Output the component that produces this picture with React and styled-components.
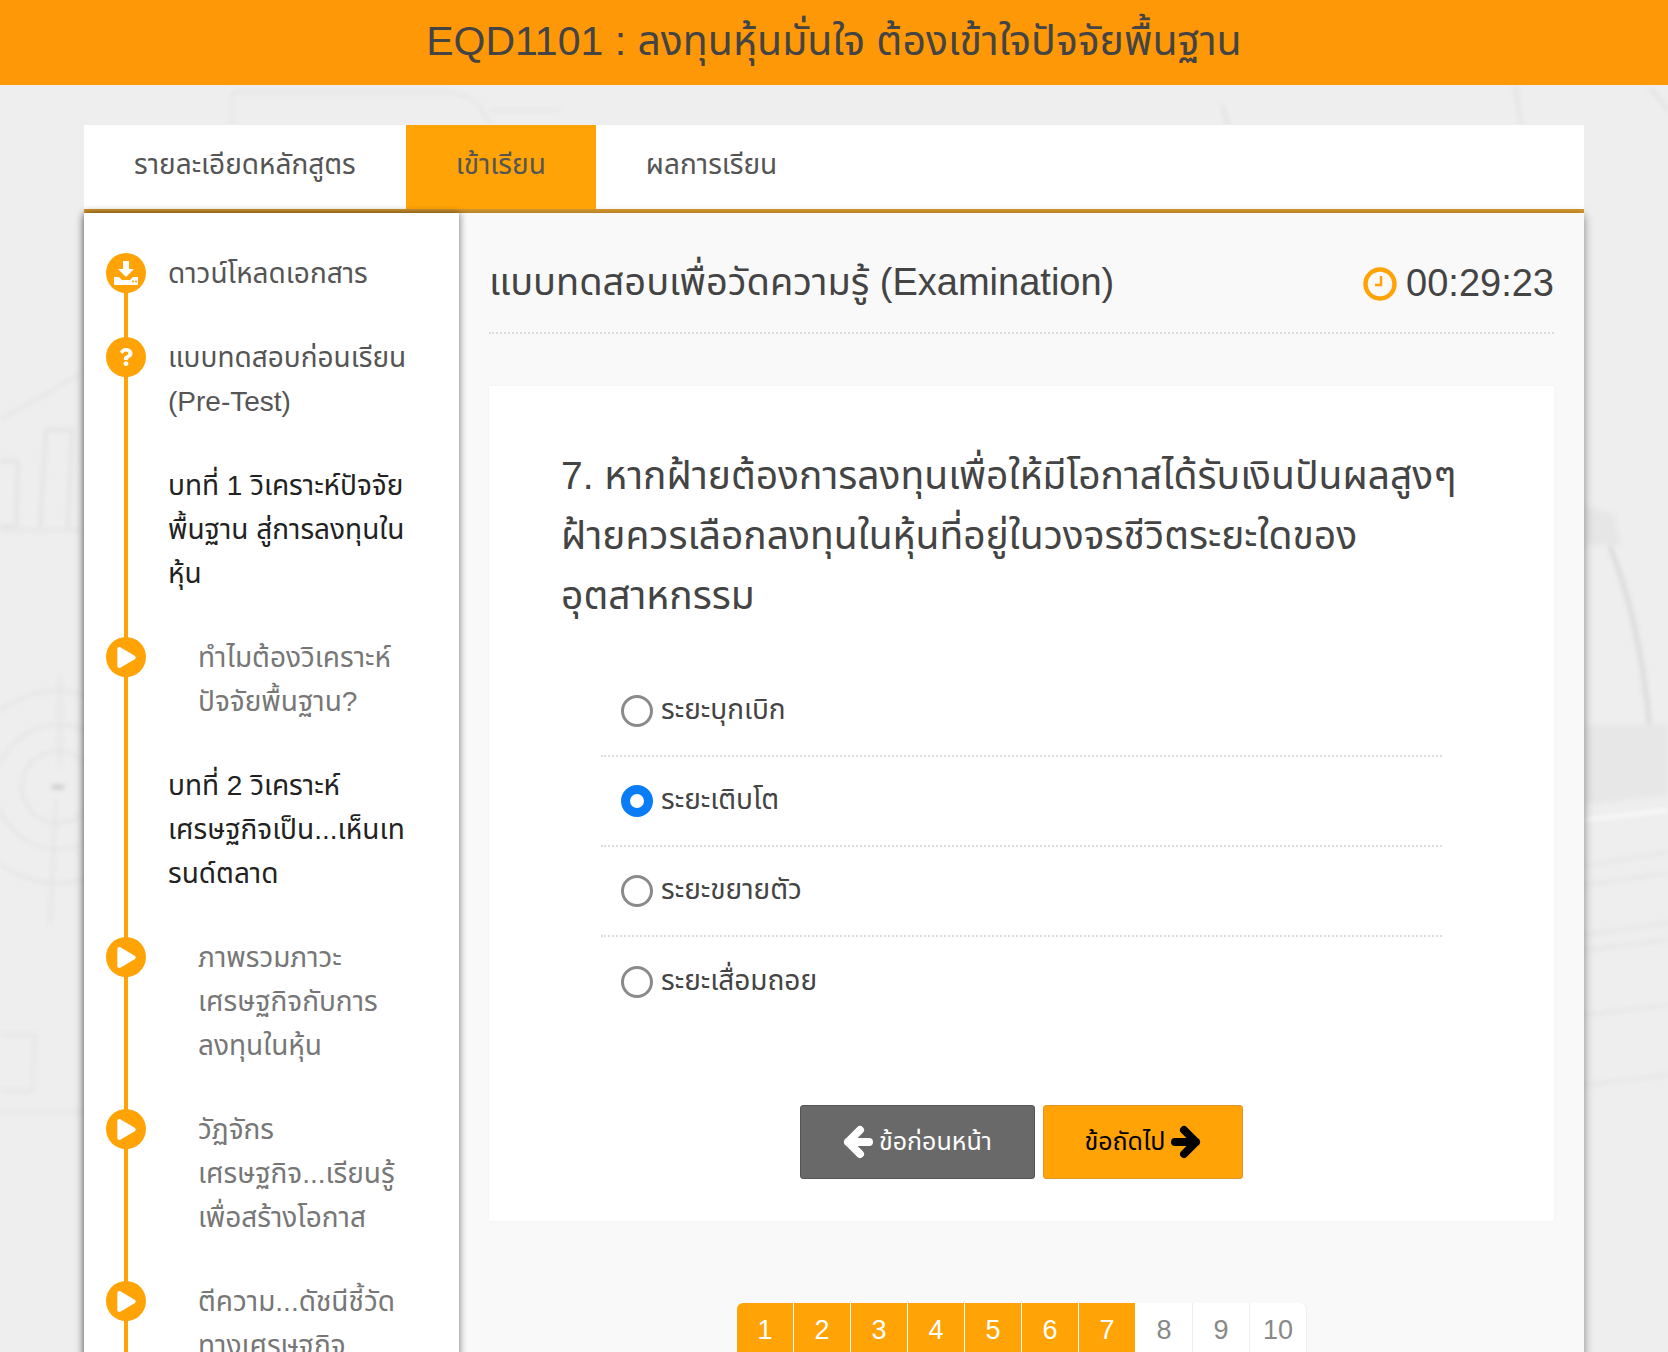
import styled, { createGlobalStyle } from "styled-components";
import { FaPlay, FaQuestion } from "react-icons/fa";

const GlobalStyle = createGlobalStyle`
  html, body {
    margin: 0;
    padding: 0;
    height: 1352px;
    overflow: hidden;
  }
  * {
    box-sizing: border-box;
  }
  body {
    font-family: "Liberation Sans", "Noto Sans Thai", "Noto Sans", sans-serif;
    color: #444;
    background: #eeeeee;
  }
`;

const orange = "#ffa306";

const Page = styled.div`
  position: relative;
  height: 1352px;
  overflow: hidden;
`;
const Backdrop = styled.svg`
  position: absolute;
  left: 0;
  top: 0;
  filter: blur(2px);
`;
const Header = styled.header`
  position: relative;
  height: 85px;
  padding-bottom: 2px;
  background: #ff9807;
  display: flex;
  align-items: center;
  justify-content: center;
  font-size: 41px;
  color: #444;
`;
const Shell = styled.div`
  position: relative;
  width: 1500px;
  margin: 40px auto 0 84px;
`;
const Tabs = styled.nav`
  display: flex;
  height: 88px;
  background: #fff;
  border-bottom: 4px solid #d99a2e;
`;
const Tab = styled.div`
  height: 84px;
  padding: 0 50px 4px;
  display: flex;
  align-items: center;
  font-size: 28px;
  color: #555;
  background: ${(props) => (props.$active ? orange : "transparent")};
`;
const Body = styled.div`
  display: flex;
  background: #f9f9f9;
  box-shadow: 0 2px 9px rgba(0, 0, 0, 0.45);
  height: 1200px;
`;
const Sidebar = styled.aside`
  position: relative;
  width: 375px;
  flex-shrink: 0;
  background: #fff;
  box-shadow: 1px 0 7px rgba(0, 0, 0, 0.45);
  padding: 39px 40px 0 84px;
  &::before {
    content: "";
    position: absolute;
    left: 40px;
    top: 60px;
    bottom: 0;
    width: 4px;
    background: ${orange};
  }
`;
const Item = styled.div`
  position: relative;
  font-size: 28px;
  line-height: 44px;
  padding-left: ${(props) => (props.$sub ? "30px" : "0")};
  margin-bottom: 40px;
  color: ${(props) => (props.$chapter ? "#222" : props.$sub ? "#777" : "#555")};
`;
const Dot = styled.span`
  position: absolute;
  left: -62px;
  top: 1px;
  width: 40px;
  height: 40px;
  border-radius: 50%;
  background: ${orange};
  color: #fff;
  display: flex;
  align-items: center;
  justify-content: center;
  font-size: ${(props) => props.$size}px;
`;
const Main = styled.main`
  flex: 1;
  padding: 26px 30px 0 30px;
`;
const TitleRow = styled.div`
  display: flex;
  justify-content: space-between;
  align-items: center;
  height: 95px;
  padding-bottom: 4px;
  border-bottom: 2px dotted #ddd;
  margin-bottom: 52px;
`;
const Heading = styled.h2`
  margin: 0;
  font-size: 38px;
  font-weight: 400;
  color: #444;
`;
const Timer = styled.div`
  display: flex;
  align-items: center;
  gap: 9px;
  font-size: 38px;
  color: #444;
`;
const Card = styled.section`
  background: #fff;
  height: 835px;
  padding: 60px 72px 0;
  box-shadow: 0 0 3px rgba(0, 0, 0, 0.04);
`;
const Question = styled.div`
  font-size: 39px;
  line-height: 60px;
  color: #444;
  margin-bottom: 41px;
`;
const Options = styled.div`
  margin: 0 40px;
`;
const Option = styled.label`
  display: flex;
  align-items: center;
  gap: 8px;
  height: 90px;
  padding-left: 20px;
  font-size: 28px;
  color: #444;
  border-bottom: ${(props) => (props.$last ? "none" : "2px dotted #ddd")};
`;
const Radio = styled.span`
  width: 32px;
  height: 32px;
  border-radius: 50%;
  background: #fff;
  border: ${(props) => (props.$on ? "9px solid #0a7cf5" : "3px solid #8a8a8a")};
`;
const OptionText = styled.span`
  margin-bottom: 2px;
`;
const Buttons = styled.div`
  display: flex;
  justify-content: center;
  gap: 8px;
  margin-top: 78px;
`;
const Btn = styled.button`
  height: 74px;
  width: ${(props) => props.$w}px;
  border-radius: 3px;
  border: 1px solid ${(props) => (props.$next ? "#e0962a" : "#555")};
  background: ${(props) => (props.$next ? orange : "#696969")};
  color: ${(props) => (props.$next ? "#000" : "#fff")};
  font: inherit;
  font-size: 25px;
  display: flex;
  align-items: center;
  justify-content: center;
  gap: 6px;
`;
const Pager = styled.div`
  display: flex;
  justify-content: center;
  margin-top: 82px;
`;
const PageNo = styled.div`
  width: 56px;
  margin-right: ${(props) => (props.$end ? 0 : "1px")};
  height: 60px;
  padding-top: 12px;
  text-align: center;
  font-size: 27px;
  background: ${(props) => (props.$done ? orange : "#fff")};
  color: ${(props) => (props.$done ? "#fff" : "#888")};
  box-shadow: 1px 0 0 ${(props) => (props.$done ? "#fff" : "#eee")};
  border-radius: ${(props) => (props.$first ? "6px 0 0 0" : props.$end ? "0 6px 0 0" : "0")};
`;

const DownloadIcon = () => (
  <svg width="26" height="26" viewBox="0 0 26 26" fill="#fff">
    <path d="M10 1h6v8h5l-8 8-8-8h5z" />
    <path d="M1 17h5l3 3h8l3-3h5v7a1 1 0 0 1-1 1H2a1 1 0 0 1-1-1z" />
    <circle cx="20" cy="21.5" r="1" fill={orange} />
    <circle cx="23" cy="21.5" r="1" fill={orange} />
  </svg>
);

const ClockIcon = () => (
  <svg width="34" height="34" viewBox="0 0 34 34" fill="none" stroke={orange}>
    <circle cx="17" cy="17" r="14.5" strokeWidth="4.5" />
    <path d="M18 9v9h-6" strokeWidth="2.5" />
  </svg>
);

const BoldArrow = ({ flip }) => (
  <svg
    width="30"
    height="34"
    viewBox="0 0 30 34"
    fill="none"
    stroke="currentColor"
    strokeWidth="8"
    strokeLinecap="round"
    strokeLinejoin="round"
    transform={flip ? "scale(-1 1)" : undefined}
  >
    <path d="M5 17h21M17 5 5 17l12 12" />
  </svg>
);

const lessons = [
  { text: "ดาวน์โหลดเอกสาร", icon: <DownloadIcon />, size: 26 },
  { text: <>แบบทดสอบก่อนเรียน<br />(Pre-Test)</>, icon: <FaQuestion />, size: 18 },
  { text: "บทที่ 1 วิเคราะห์ปัจจัย พื้นฐาน สู่การลงทุนใน หุ้น", chapter: true },
  { text: "ทำไมต้องวิเคราะห์ ปัจจัยพื้นฐาน?", sub: true, icon: <FaPlay />, size: 21 },
  { text: <>บทที่ 2 วิเคราะห์<br />เศรษฐกิจเป็น...เห็นเท<br />รนด์ตลาด</>, chapter: true },
  { text: "ภาพรวมภาวะ เศรษฐกิจกับการ ลงทุนในหุ้น", sub: true, icon: <FaPlay />, size: 21 },
  { text: "วัฏจักร เศรษฐกิจ...เรียนรู้ เพื่อสร้างโอกาส", sub: true, icon: <FaPlay />, size: 21 },
  { text: "ตีความ...ดัชนีชี้วัด ทางเศรษฐกิจ", sub: true, icon: <FaPlay />, size: 21 },
];
const answers = ["ระยะบุกเบิก", "ระยะเติบโต", "ระยะขยายตัว", "ระยะเสื่อมถอย"];
const pages = [1, 2, 3, 4, 5, 6, 7, 8, 9, 10];

export default function App() {
  return (
    <Page>
      <GlobalStyle />
      <Backdrop width="1668" height="1352" fill="none" stroke="#e2e2e2" strokeWidth="2">
        <path d="M232 125V96q0-4 8-4h200q40 0 50 33M490 110h70" />
        <path d="M1515 85l6 40M1650 88l18 22M1222 105l6 20" strokeWidth="3" />
        <path d="M0 420 L84 372 M0 530 H84" />
        <path d="M0 461h18l-2 65H0M40 528l6-98h26l-4 98" strokeWidth="3" />
        <circle cx="58" cy="787" r="36" />
        <circle cx="58" cy="787" r="62" />
        <circle cx="58" cy="787" r="96" />
        <path d="M60 675v92M56 800l-6 125" />
        <path d="M52 787h12" stroke="#cfcfcf" strokeWidth="5" />
        <path d="M0 1035h35l-3 56H0M0 1112h84" />
        <path d="M1584 505l30 10 6 30h-36z" fill="#e6e6e6" stroke="none" />
        <path d="M1610 546q36 90 43 226" stroke="#dcdcdc" strokeWidth="5" />
        <path d="M1584 725h84v70l-84 10z" fill="#e7e7e7" stroke="none" />
        <path d="M1584 820l84-10" stroke="#f8f8f8" strokeWidth="4" />
        <path d="M1584 866l84-14M1584 885l84-12M1584 935l84-12M1584 950l84-10M1584 1015l84-10M1584 1085l84-10" />
      </Backdrop>
      <Header>EQD1101 : ลงทุนหุ้นมั่นใจ ต้องเข้าใจปัจจัยพื้นฐาน</Header>
      <Shell>
        <Tabs>
          <Tab>รายละเอียดหลักสูตร</Tab>
          <Tab $active>เข้าเรียน</Tab>
          <Tab>ผลการเรียน</Tab>
        </Tabs>
        <Body>
          <Sidebar>
            {lessons.map((item, i) => (
              <Item key={i} $sub={item.sub} $chapter={item.chapter}>
                {item.icon && <Dot $size={item.size}>{item.icon}</Dot>}
                {item.text}
              </Item>
            ))}
          </Sidebar>
          <Main>
            <TitleRow>
              <Heading>แบบทดสอบเพื่อวัดความรู้ (Examination)</Heading>
              <Timer>
                <ClockIcon />
                00:29:23
              </Timer>
            </TitleRow>
            <Card>
              <Question>
                7. หากฝ้ายต้องการลงทุนเพื่อให้มีโอกาสได้รับเงินปันผลสูงๆ<br />
                ฝ้ายควรเลือกลงทุนในหุ้นที่อยู่ในวงจรชีวิตระยะใดของ<br />
                อุตสาหกรรม
              </Question>
              <Options>
                {answers.map((answer, i) => (
                  <Option key={answer} $last={i === answers.length - 1}>
                    <Radio $on={i === 1} />
                    <OptionText>{answer}</OptionText>
                  </Option>
                ))}
              </Options>
              <Buttons>
                <Btn $w={235}><BoldArrow /> ข้อก่อนหน้า</Btn>
                <Btn $w={200} $next>ข้อถัดไป <BoldArrow flip /></Btn>
              </Buttons>
            </Card>
            <Pager>
              {pages.map((n) => (
                <PageNo key={n} $done={n <= 7} $first={n === 1} $end={n === 10}>{n}</PageNo>
              ))}
            </Pager>
          </Main>
        </Body>
      </Shell>
    </Page>
  );
}
